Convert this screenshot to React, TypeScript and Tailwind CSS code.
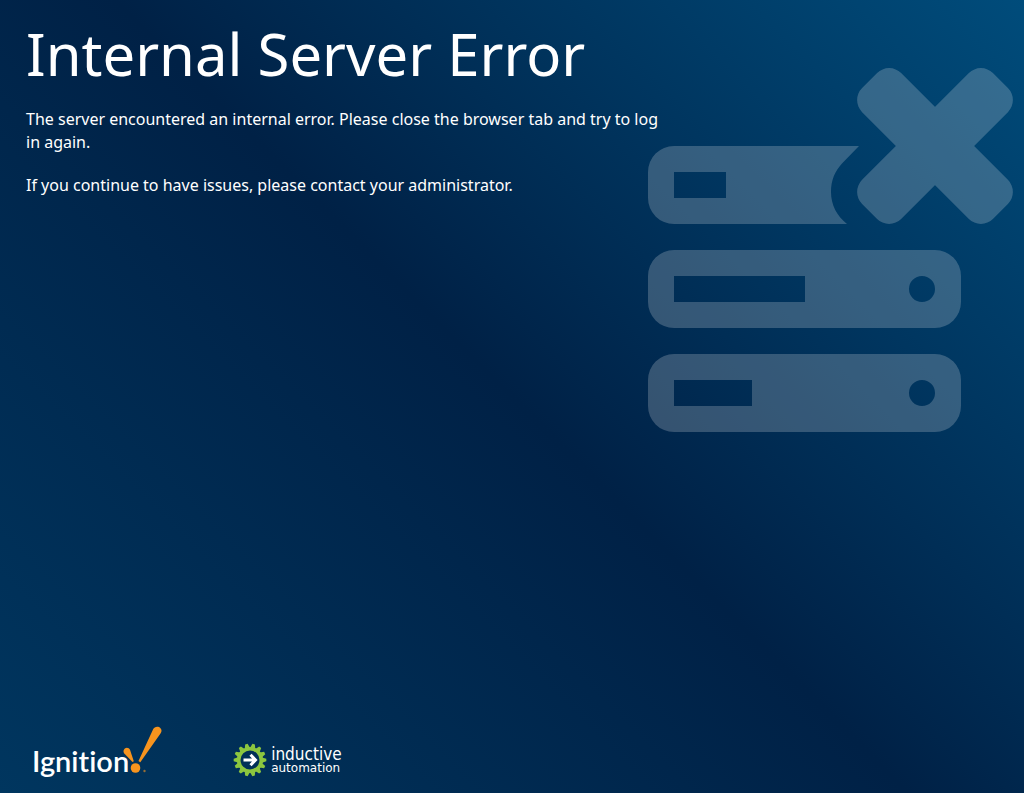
import React from 'react';

const servers = [
  { y: 182, bar: 131 },
  { y: 286, bar: 78 },
];

// angles of the gear teeth, 14 around the ring
const teeth = Array.from({ length: 14 }, (_, i) => (i * 360) / 14 + 13);

function ServerErrorIcon() {
  return (
    <svg viewBox="0 0 366 365" className="w-full" aria-hidden="true">
      <g fill="#f0f0f0" opacity="0.22">
        {/* Broken server */}
        <path
          fillRule="evenodd"
          d="M26 78H211L194 95.500C187 103 183 112 183 124C183 137 189 148 199 156H26A26 26 0 0 1 0 130V104A26 26 0 0 1 26 78ZM26 104V130H78V104Z"
        />
        {servers.map(({ y, bar }) => (
          <path
            key={y}
            fillRule="evenodd"
            d={`M26 ${y}H287a26 26 0 0 1 26 26v26a26 26 0 0 1 -26 26H26a26 26 0 0 1 -26 -26v-26a26 26 0 0 1 26 -26ZM26 ${y + 26}v26h${bar}v-26ZM261 ${y + 39}a13 13 0 1 0 26 0a13 13 0 1 0 -26 0Z`}
          />
        ))}
        {/* Cross */}
        <rect x="194.500" y="50.400" width="185" height="55.200" rx="17" transform="rotate(45 287 78)" />
        <rect x="194.500" y="50.400" width="185" height="55.200" rx="17" transform="rotate(-45 287 78)" />
      </g>
    </svg>
  );
}

function IgnitionLogo() {
  return (
    <div className="flex items-end">
      <span className="font-['Lato'] text-[29px] leading-[32px] font-semibold [font-variant-ligatures:none]">Ignition</span>
      <svg viewBox="0 0 40 50" className="-ml-1.5 w-10 h-[50px] mb-0.5" fill="#f7941e" aria-hidden="true">
        <path d="M37.500 3.200C35.500 1 31.500 1.300 30 4.500L15.500 36L17.300 37.300L37.500 8.500C38.900 6.400 38.900 4.700 37.500 3.200Z" />
        <path d="M.6 25.500C1.200 22.200 5.600 21.500 7 24.800L10.800 36.200L9.500 37L1.300 28.500C.6 27.700 .4 26.700 .6 25.500Z" />
        <circle cx="12.500" cy="43" r="4.800" />
        <circle cx="21.500" cy="46" r="1.200" opacity="0.6" />
      </svg>
    </div>
  );
}

function InductiveLogo() {
  return (
    <div className="flex items-center gap-1">
      <svg viewBox="-17 -17 34 34" className="w-[34px] h-[34px]" aria-hidden="true">
        {teeth.map((angle) => (
          <path key={angle} d="M-2.600 -12L-1.300 -16.300H1.300L2.600 -12Z" fill="#8cc63f" transform={`rotate(${angle})`} />
        ))}
        <circle r="11.300" fill="none" stroke="#8cc63f" strokeWidth="3.600" />
        <path d="M-6.500 0H5M.5 -5.200L5.500 0L.5 5.200" fill="none" stroke="#fff" strokeWidth="3" />
      </svg>
      <div className="flex flex-col">
        <span className="font-['DejaVu_Sans_Condensed','Noto_Sans'] text-[17px] leading-[16px]">inductive</span>
        <span className="font-['DejaVu_Sans'] text-[12px] leading-[12px]">automation</span>
      </div>
    </div>
  );
}

export default function App() {
  return (
    <div className="min-h-screen flex flex-col justify-between bg-[linear-gradient(45deg,#00365f_0%,#002146_50%,#004c7b_100%)] text-white font-['Noto_Sans',sans-serif]">
      <main className="flex pl-[26px] pr-[10px]">
        <div className="flex-1 pt-3">
          <h1 className="text-[58px] leading-[84px]">Internal Server Error</h1>
          {/* the copy runs slightly into the empty corner of the icon */}
          <div className="mt-3 -mr-4 space-y-5 text-base leading-[23px]">
            <p>The server encountered an internal error. Please close the browser tab and try to log in again.</p>
            <p>If you continue to have issues, please contact your administrator.</p>
          </div>
        </div>
        <div className="w-[366px] shrink-0 pt-[68px]">
          <ServerErrorIcon />
        </div>
      </main>

      <footer className="flex items-end gap-[70px] px-8 pb-4">
        <IgnitionLogo />
        <InductiveLogo />
      </footer>
    </div>
  );
}
